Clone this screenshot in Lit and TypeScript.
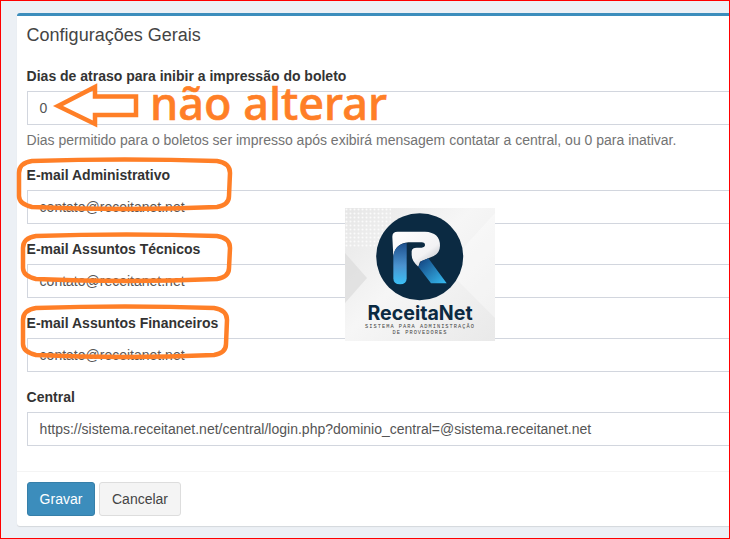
import { LitElement, html, css, svg } from "lit";
import { customElement } from "lit/decorators.js";

const fields = [
  { label: "E-mail Administrativo", value: "contato@receitanet.net" },
  { label: "E-mail Assuntos Técnicos", value: "contato@receitanet.net" },
  { label: "E-mail Assuntos Financeiros", value: "contato@receitanet.net" },
  { label: "Central", value: "https://sistema.receitanet.net/central/login.php?dominio_central=@sistema.receitanet.net" },
];

@customElement("app-root")
export class AppRoot extends LitElement {
  static styles = css`
    :host { display: block; width: 730px; height: 539px; font-family: "Liberation Sans", Arial, sans-serif; }
    .frame { position: relative; box-sizing: border-box; width: 730px; height: 539px; border: 1px solid #f00; background: #ecf0f5; overflow: hidden; padding: 12px 0 0 16px; }
    .card { box-sizing: border-box; width: 740px; height: 513px; background: #fff; border-top: 3px solid #3c8dbc; border-radius: 3px; box-shadow: 0 1px 1px rgba(0,0,0,.1); }
    .title { margin: 0; padding: 9px 10px 11px 9.6px; font-size: 18px; font-weight: 400; line-height: 20px; color: #444; }
    .body { padding: 10px 10px 0; }
    .group { margin-bottom: 15px; }
    label { display: block; font-size: 14px; font-weight: 700; line-height: 20px; margin-bottom: 5px; color: #333; margin-left: -0.4px; }
    .input { box-sizing: border-box; height: 34px; border: 1px solid #d2d6de; padding: 6px 11.6px; font-size: 14px; line-height: 20px; color: #555; background: #fff; white-space: nowrap; }
    .help { margin: 5px 0 15px -0.4px; font-size: 14px; line-height: 20px; color: #737373; }
    .footer { border-top: 1px solid #f4f4f4; padding: 10px; margin-top: 25px; display: flex; gap: 4px; }
    .btn { box-sizing: border-box; height: 34px; font: 14px/20px "Liberation Sans", Arial, sans-serif; border-radius: 3px; border: 1px solid transparent; }
    .primary { width: 68px; padding: 6px 0; background: #3c8dbc; border-color: #367fa9; color: #fff; }
    .cancel { width: 82px; padding: 6px 0; background: #f4f4f4; border-color: #ddd; color: #444; }

    .marks { position: absolute; left: -1px; top: -1px; width: 730px; height: 539px; pointer-events: none; }
    .warn { position: absolute; left: 149px; top: 87px; font-family: "Noto Sans", sans-serif; font-size: 45px; line-height: 30px; font-weight: 500; color: #ff7f27; white-space: nowrap; -webkit-text-stroke: .6px #ff7f27; }

    .logo { position: absolute; left: 344px; top: 207px; width: 150px; height: 133px; background: linear-gradient(135deg, #e6e6e6 0%, #f6f6f6 45%, #e9e9e9 100%); overflow: hidden; }
    .logo svg { position: absolute; left: 0; top: 0; }
    .brand { position: absolute; left: 0; right: 0; top: 97px; text-align: center; font-family: Inter, sans-serif; font-weight: 700; font-size: 19.6px; line-height: 16px; color: #0b2a42; }
    .tag { position: absolute; left: 0; right: 0; top: 116px; text-align: center; font-family: "Liberation Mono", monospace; font-size: 5.3px; line-height: 6px; letter-spacing: 1.05px; color: #444; white-space: nowrap; }
  `;

  private oval(x: number, y: number, w: number, h: number) {
    const r = 13;
    const x2 = x + w, y2 = y + h;
    return svg`<path d="M${x + r} ${y + 1} Q${x + w * .5} ${y - 2} ${x2 - r} ${y + 1} Q${x2} ${y + 3} ${x2} ${y + r} L${x2 - 1} ${y2 - r} Q${x2 - 1} ${y2 - 4} ${x2 - r} ${y2 - 2} Q${x + w * .5} ${y2 + 2} ${x + r} ${y2 - 2} Q${x} ${y2 - 5} ${x} ${y2 - r} L${x} ${y + r} Q${x} ${y + 3} ${x + r} ${y + 1} Z"/>`;
  }

  render() {
    return html`
      <div class="frame">
        <div class="card">
          <h3 class="title">Configurações Gerais</h3>
          <div class="body">
            <div>
              <label>Dias de atraso para inibir a impressão do boleto</label>
              <div class="input">0</div>
              <p class="help">Dias permitido para o boletos ser impresso após exibirá mensagem contatar a central, ou 0 para inativar.</p>
            </div>
            ${fields.map(f => html`
              <div class="group">
                <label>${f.label}</label>
                <div class="input">${f.value}</div>
              </div>`)}
          </div>
          <div class="footer">
            <button class="btn primary">Gravar</button>
            <button class="btn cancel">Cancelar</button>
          </div>
        </div>

        <svg class="marks" viewBox="0 0 730 539" fill="none" stroke="#ff7f27" stroke-width="4.5" stroke-linejoin="miter">
          <path d="M58 106 L95 87 L95 96.5 L136 96.5 L136 115 L95 115 L95 124 Z"/>
          ${this.oval(19, 160, 211, 49)}
          ${this.oval(23, 235, 207, 46)}
          ${this.oval(23, 307, 204, 50)}
        </svg>
        <div class="warn">não alterar</div>

        <div class="logo">
          <svg width="150" height="133" viewBox="0 0 150 133">
            <defs>
              <linearGradient id="lg1" x1="0" y1="0" x2="0" y2="1">
                <stop offset="0" stop-color="#1d4f8c"/><stop offset=".55" stop-color="#4b93cf"/><stop offset="1" stop-color="#3cc0f5"/>
              </linearGradient>
              <linearGradient id="lg2" x1="0" y1="0" x2="1" y2="1">
                <stop offset="0" stop-color="#123f7c"/><stop offset="1" stop-color="#37bdf2"/>
              </linearGradient>
              <linearGradient id="lg3" x1="0" y1="0" x2="1" y2="1">
                <stop offset="0" stop-color="#fff"/><stop offset=".65" stop-color="#f2f2f4"/><stop offset="1" stop-color="#aeb2bb"/>
              </linearGradient>
              <pattern id="dots" width="4" height="4" patternUnits="userSpaceOnUse"><circle cx="1.5" cy="1.5" r="1" fill="#fff"/></pattern>
            </defs>
            <rect x="0" y="0" width="46" height="40" fill="url(#dots)" opacity=".8"/>
            <path d="M0 45 L22 70 L0 95 Z" fill="#dcdcdc" opacity=".7"/>
            <path d="M150 5 L100 60 L150 110 Z" fill="#fff" opacity=".35"/>
            <circle cx="74.7" cy="48.7" r="43.5" fill="#0b2a42"/>
            <g transform="translate(30 17) scale(.3333)">
              <path d="M52 35 Q52 20 68 20 L150 20 Q195 22 195 62 Q195 90 160 100 L135 110 L130 125 Q110 108 110 90 L110 78 Q112 68 125 68 L140 68 Q150 66 150 60 Q150 52 140 52 L100 52 Q60 55 55 95 Z" fill="url(#lg3)"/>
              <path d="M55 95 Q58 58 95 54 L95 160 Q95 178 75 178 Q55 178 55 160 Z" fill="url(#lg1)"/>
              <path d="M130 125 L138 109 Q150 105 160 100 L215 175 L168 175 Z" fill="url(#lg2)"/>
            </g>
          </svg>
          <div class="brand">ReceitaNet</div>
          <div class="tag">SISTEMA PARA ADMINISTRAÇÃO<br>DE PROVEDORES</div>
        </div>
      </div>
    `;
  }
}
